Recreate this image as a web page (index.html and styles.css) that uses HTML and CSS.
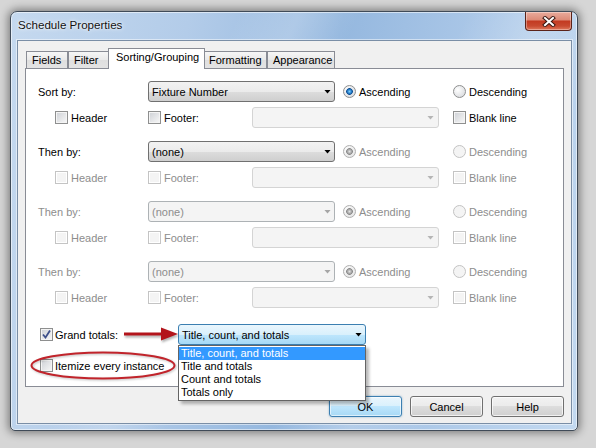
FILE: index.html
```html
<!DOCTYPE html>
<html>
<head>
<meta charset="utf-8">
<title>Schedule Properties</title>
<link rel="stylesheet" href="styles.css">
</head>
<body>
<div class="window">
  <div class="titlebar">
    <span class="title">Schedule Properties</span>
    <div class="close">
      <svg width="14" height="11" viewBox="0 0 14 11"><path d="M3 2 L11 9 M11 2 L3 9" stroke="#3a1812" stroke-width="4" stroke-linecap="square" fill="none"/><path d="M3 2 L11 9 M11 2 L3 9" stroke="#fff" stroke-width="2" stroke-linecap="square" fill="none"/></svg>
    </div>
  </div>
  <div class="client">
    <div class="tabs">
      <div class="tab t-fields">Fields</div>
      <div class="tab t-filter">Filter</div>
      <div class="tab active t-sort">Sorting/Grouping</div>
      <div class="tab t-format">Formatting</div>
      <div class="tab t-appear">Appearance</div>
    </div>
    <div class="panel">
      <div class="groups">
        <div class="group">
          <span class="lbl">Sort by:</span>
          <div class="combo"><span>Fixture Number</span><i class="arr"></i></div>
          <div class="opt"><span class="radio on"></span>Ascending</div>
          <div class="opt"><span class="radio"></span>Descending</div>
          <div class="opt hdr"><span class="check"></span>Header</div>
          <div class="opt"><span class="check"></span>Footer:</div>
          <div class="field"><i class="arr"></i></div>
          <div class="opt"><span class="check"></span>Blank line</div>
        </div>
        <div class="group">
          <span class="lbl">Then by:</span>
          <div class="combo"><span>(none)</span><i class="arr"></i></div>
          <div class="opt dis"><span class="radio on"></span>Ascending</div>
          <div class="opt dis"><span class="radio"></span>Descending</div>
          <div class="opt hdr dis"><span class="check"></span>Header</div>
          <div class="opt dis"><span class="check"></span>Footer:</div>
          <div class="field"><i class="arr"></i></div>
          <div class="opt dis"><span class="check"></span>Blank line</div>
        </div>
        <div class="group">
          <span class="lbl dis">Then by:</span>
          <div class="combo disabled"><span>(none)</span><i class="arr"></i></div>
          <div class="opt dis"><span class="radio on"></span>Ascending</div>
          <div class="opt dis"><span class="radio"></span>Descending</div>
          <div class="opt hdr dis"><span class="check"></span>Header</div>
          <div class="opt dis"><span class="check"></span>Footer:</div>
          <div class="field"><i class="arr"></i></div>
          <div class="opt dis"><span class="check"></span>Blank line</div>
        </div>
        <div class="group">
          <span class="lbl dis">Then by:</span>
          <div class="combo disabled"><span>(none)</span><i class="arr"></i></div>
          <div class="opt dis"><span class="radio on"></span>Ascending</div>
          <div class="opt dis"><span class="radio"></span>Descending</div>
          <div class="opt hdr dis"><span class="check"></span>Header</div>
          <div class="opt dis"><span class="check"></span>Footer:</div>
          <div class="field"><i class="arr"></i></div>
          <div class="opt dis"><span class="check"></span>Blank line</div>
        </div>
      </div>
      <div class="totals">
        <div class="opt tight"><span class="check checked"><svg width="11" height="11" viewBox="0 0 11 11"><path d="M2 5.5 L4.5 8.5 L9 1.5" stroke="#3d4f8a" stroke-width="1.8" fill="none"/></svg></span>Grand totals:</div>
        <div class="combo-wrap">
          <div class="combo focus"><span>Title, count, and totals</span><i class="arr"></i></div>
          <ul class="dropdown">
            <li class="sel">Title, count, and totals</li>
            <li>Title and totals</li>
            <li>Count and totals</li>
            <li>Totals only</li>
          </ul>
        </div>
        <svg class="pointer" width="54" height="16" viewBox="0 0 54 16">
          <rect x="0" y="6.5" width="40" height="3" fill="#b3141b"/>
          <polygon points="37,1.5 54,8 37,14.5" fill="#b3141b"/>
        </svg>
      </div>
      <div class="itemize">
        <div class="opt tight"><span class="check"></span>Itemize every instance</div>
        <svg class="ring" width="146" height="29" viewBox="0 0 146 29"><ellipse cx="73" cy="14.5" rx="71.5" ry="13" fill="none" stroke="#c1242b" stroke-width="2"/></svg>
      </div>
    </div>
    <div class="buttons">
      <div class="btn default">OK</div>
      <div class="btn">Cancel</div>
      <div class="btn">Help</div>
    </div>
  </div>
</div>
</body>
</html>
```
FILE: styles.css
```css
* { box-sizing: border-box; }
html, body { margin: 0; padding: 0; }
body {
  width: 596px;
  height: 448px;
  overflow: hidden;
  background: #d6d6d6;
  font-family: "Liberation Sans", Arial, sans-serif;
  font-size: 11px;
  color: #000;
}
.window {
  margin: 11px 0 0 10px;
  width: 568px;
  height: 420px;
  border: 1px solid #404b58;
  border-radius: 7px 7px 5px 5px;
  background:
    linear-gradient(115deg, rgba(255,255,255,0) 30%, rgba(255,255,255,.18) 38%, rgba(255,255,255,0) 46%, rgba(255,255,255,0) 60%, rgba(255,255,255,.2) 70%, rgba(255,255,255,0) 80%),
    linear-gradient(100deg, #c5d9ef 0%, #b3cce9 28%, #95b8df 52%, #a9c6e7 72%, #c3d9f0 100%);
  box-shadow: 0 0 9px 2px rgba(0,0,0,.42), inset 0 0 0 1px rgba(255,255,255,.55);
  padding: 0 5px 6px 6px;
  display: flex;
  flex-direction: column;
}
.titlebar {
  height: 28px;
  flex: none;
  display: flex;
  justify-content: space-between;
  align-items: flex-start;
}
.title {
  padding: 6px 0 0 1px;
  line-height: 14px;
  font-size: 11.6px;
  color: #111;
  text-shadow: 0 0 5px rgba(255,255,255,.95), 0 0 2px rgba(255,255,255,.9);
}
.close {
  width: 47px;
  height: 19px;
  border: 1px solid #5b2319;
  border-top: none;
  border-radius: 0 0 4px 4px;
  background: linear-gradient(#e9ab9c 0%, #dd8c79 42%, #c33b22 52%, #c84a30 78%, #e07a5e 100%);
  box-shadow: inset 0 0 0 1px rgba(255,255,255,.35);
  display: flex;
  align-items: center;
  justify-content: center;
}
.client {
  flex: 1;
  border: 1px solid #7a8ea6;
  box-shadow: 0 0 0 1px rgba(255,255,255,.5);
  background: #f0f0f0;
  padding-top: 7px;
  display: flex;
  flex-direction: column;
}
.tabs {
  display: flex;
  align-items: flex-end;
  height: 21px;
  margin: 0 0 -1px 8px;
}
.tab {
  height: 17px;
  margin-bottom: 1px;
  border: 1px solid #898c95;
  border-bottom: none;
  padding: 1px 0 0 5px;
  line-height: 14px;
  white-space: nowrap;
  background: linear-gradient(#f6f6f6, #e9e9e9 50%, #dfdfdf 51%, #e3e3e3);
}
.t-fields { width: 42px; }
.t-filter { width: 42px; }
.t-format { width: 64px; }
.t-appear { width: 68px; }
.tab.active {
  width: 97px;
  height: 21px;
  margin: 0 -2px;
  padding-left: 7px;
  background: #fff;
  position: relative;
  z-index: 2;
}
.panel {
  margin-left: 7px;
  width: 539px;
  height: 319px;
  border: 1px solid #898c95;
  background: #fff;
  padding: 12px 0 0 12px;
}
.groups {
  display: flex;
  flex-direction: column;
  gap: 13px;
}
.group {
  display: grid;
  grid-template-columns: 110px 104px 91px 110px 1fr;
  grid-template-rows: 21px 21px;
  row-gap: 5px;
  align-items: center;
}
.lbl { line-height: 14px; }
.dis { color: #8d8d8d; }
.opt {
  display: flex;
  align-items: center;
  gap: 3px;
  white-space: nowrap;
  line-height: 14px;
}
.opt.tight { gap: 2px; }
.hdr { padding-left: 17px; }
.check {
  width: 13px;
  height: 13px;
  flex: none;
  border: 1px solid #8e8f8f;
  background: linear-gradient(135deg, #cdd0d5, #f8f8f8);
  box-shadow: inset 0 0 0 1px #f4f4f4;
  display: flex;
  align-items: center;
  justify-content: center;
}
.dis .check {
  border-color: #c4c4c4;
  background: #f4f4f4;
  box-shadow: inset 0 0 0 1px #fff;
}
.radio {
  width: 13px;
  height: 13px;
  flex: none;
  border-radius: 50%;
  border: 1px solid #8e8f8f;
  background: radial-gradient(circle at 35% 35%, #ffffff, #d2d4d8);
}
.radio.on {
  background:
    radial-gradient(circle at 50% 50%, #7fd0f7 0px, #2a84d2 1.8px, #0f4f92 3px, rgba(15,79,146,0) 3.7px),
    radial-gradient(circle at 35% 35%, #ffffff, #d2d4d8);
}
.dis .radio {
  border-color: #c3c3c3;
  background: #f4f4f4;
}
.dis .radio.on {
  border-color: #b0b0b0;
  background:
    radial-gradient(circle at 50% 50%, #e2e2e2 0px, #a9a9a9 2px, #8a8a8a 3px, rgba(138,138,138,0) 3.7px),
    radial-gradient(circle at 35% 35%, #ffffff, #e0e0e0);
}
.combo {
  grid-column: span 2;
  justify-self: start;
  width: 187px;
  height: 21px;
  border: 1px solid #707070;
  border-radius: 3px;
  background: linear-gradient(#f2f2f2 0%, #ebebeb 50%, #dddddd 50%, #cfcfcf 100%);
  display: flex;
  align-items: center;
  justify-content: space-between;
  padding: 0 3px 0 3px;
  white-space: nowrap;
}
.arr {
  display: block;
  width: 7px;
  height: 4px;
  background: #000;
  clip-path: polygon(0 0, 100% 0, 50% 100%);
}
.combo.disabled {
  border-color: #adb2b5;
  background: #f4f4f4;
  color: #8d8d8d;
}
.combo.disabled .arr { background: #a6a6a6; }
.combo.focus {
  width: 188px;
  border-color: #3c7fb1;
  background: linear-gradient(#eaf6fd 0%, #d9f0fc 50%, #bee6fd 50%, #a7d9f5 100%);
}
.field {
  grid-column: span 2;
  justify-self: start;
  width: 187px;
  height: 21px;
  border: 1px solid #d4d4d4;
  border-radius: 3px;
  background: #f4f4f4;
  display: flex;
  align-items: center;
  justify-content: flex-end;
  padding-right: 4px;
}
.field .arr { background: #b5b5b5; }
.totals {
  position: relative;
  margin-top: 16px;
  height: 21px;
  padding-left: 2px;
  display: grid;
  grid-template-columns: 138px 188px;
  align-items: center;
}
.combo-wrap { position: relative; }
.dropdown {
  position: absolute;
  top: 100%;
  left: 0;
  width: 188px;
  margin: 0;
  padding: 1px 0;
  list-style: none;
  background: #fff;
  border: 1px solid #646464;
  box-shadow: 3px 3px 3px rgba(0,0,0,.28);
  z-index: 5;
}
.dropdown li {
  height: 13px;
  line-height: 13px;
  padding-left: 2px;
  white-space: nowrap;
}
.dropdown li.sel { background: #3399ff; color: #fff; }
.pointer {
  position: absolute;
  left: 86px;
  top: 2px;
  filter: drop-shadow(1px 2px 1px rgba(0,0,0,.3));
}
.itemize {
  position: relative;
  margin-top: 13px;
  height: 15px;
  padding-left: 2px;
  display: flex;
  align-items: center;
}
.ring {
  position: absolute;
  left: -8px;
  top: -7px;
  filter: drop-shadow(1px 1px 1px rgba(0,0,0,.25));
}
.buttons {
  margin: 9px 7px 0 0;
  display: flex;
  justify-content: flex-end;
  gap: 8px;
}
.btn {
  width: 73px;
  height: 21px;
  border: 1px solid #707070;
  border-radius: 3px;
  background: linear-gradient(#f2f2f2 0%, #ebebeb 50%, #dddddd 50%, #cfcfcf 100%);
  box-shadow: inset 0 0 0 1px rgba(255,255,255,.7);
  display: flex;
  align-items: center;
  justify-content: center;
  line-height: 14px;
}
.btn.default {
  border-color: #3c7fb1;
  background: linear-gradient(#eaf6fd 0%, #d9f0fc 50%, #bee6fd 50%, #a7d9f5 100%);
  box-shadow: inset 0 0 0 1px rgba(255,255,255,.6), 0 0 2px rgba(60,127,177,.6);
}
```
